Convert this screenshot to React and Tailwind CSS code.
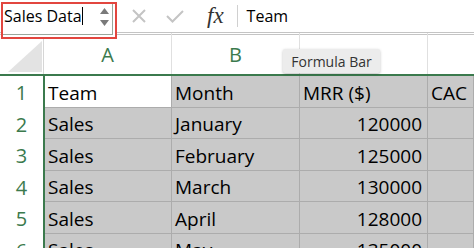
import React from 'react';

const rows = [
  ['Team', 'Month', 'MRR ($)', 'CAC'],
  ['Sales', 'January', '120000', ''],
  ['Sales', 'February', '125000', ''],
  ['Sales', 'March', '130000', ''],
  ['Sales', 'April', '128000', ''],
  ['Sales', 'May', '135000', ''],
];

const font = { fontFamily: '"Open Sans", "Noto Sans", sans-serif' };

export default function App() {
  return (
    <div className="w-[474px] h-[248px] overflow-hidden bg-white relative" style={font}>
      {/* Formula bar */}
      <div className="h-[35px] flex items-start border-b-[3px] border-double border-[#c4c4c4]">
        <div className="relative w-[116px] h-[37px] mt-[2px] ml-[1px] border-2 border-[#e2463f] shrink-0 z-10 bg-white">
          <div className="h-[31px] w-[110px] border-r border-b border-[#9aa79c] flex items-center">
            <span className="text-[16px] text-black leading-none -mt-[7px] ml-[1px]">Sales Data</span>
            <span className="w-px h-[18px] bg-black -mt-[7px]" />
            <div className="ml-auto mr-[3px] flex flex-col gap-[6px] -mt-[4px]">
              <svg width="9" height="6" viewBox="0 0 9 6"><path d="M4.5 0L9 6H0z" fill="#7a7a7a" /></svg>
              <svg width="9" height="6" viewBox="0 0 9 6"><path d="M0 0h9L4.5 6z" fill="#7a7a7a" /></svg>
            </div>
          </div>
        </div>
        <div className="flex items-center h-[32px] ml-[14px]">
          <svg width="16" height="16" viewBox="0 0 16 16">
            <path d="M2 2L14 14M14 2L2 14" stroke="#c4c4c4" strokeWidth="2" />
          </svg>
          <svg width="20" height="16" viewBox="0 0 20 16" className="ml-[18px]">
            <path d="M2 8L7.5 13.5L18 3" stroke="#c4c4c4" strokeWidth="2" fill="none" />
          </svg>
          <span className="ml-[22px] text-[23px] italic text-[#333]" style={{ fontFamily: '"Liberation Serif", serif' }}>fx</span>
          <span className="ml-[13px] w-px h-[22px] bg-[#d0d0d0]" />
          <span className="ml-[9px] text-[16px] text-black">Team</span>
        </div>
      </div>

      {/* Column headers */}
      <div className="flex h-[43px] border-b-2 border-[#3b7a4d] -mt-[2px]">
        <div className="w-[44px] shrink-0 border-r border-[#d6d6d6] flex items-end justify-end pr-[1px] pb-[2px]">
          <svg width="34" height="31" viewBox="0 0 34 31"><path d="M34 0V31H0z" fill="#e3e3e3" /></svg>
        </div>
        {['A', 'B', '', ''].map((c, i) => (
          <div
            key={i}
            className={`${i === 3 ? 'flex-1' : 'w-[128px] border-r border-[#e0e0e0]'} flex items-center justify-center text-[20px] text-[#3b7a4d] pt-[2px]`}
          >
            {c}
          </div>
        ))}
      </div>

      {/* Grid */}
      {rows.map((r, ri) => (
        <div key={ri} className="flex h-[31.5px]">
          <div className="w-[43px] shrink-0 flex items-center justify-center text-[20px] text-[#3b7a4d] pt-[3px]">
            {ri + 1}
          </div>
          <div className="w-[2px] bg-[#3b7a4d]" />
          {r.map((v, ci) => (
            <div
              key={ci}
              className={`${ci === 0 ? 'w-[127px]' : ci === 3 ? 'flex-1' : 'w-[128px]'} ${
                ri === 0 && ci === 0 ? 'bg-white' : 'bg-[#c9c9c9]'
              } border-r border-b border-[#acacac] flex items-center text-[19px] text-black pt-[3px] ${
                ri > 0 && ci === 2 ? 'justify-end pr-[5px]' : 'pl-[3px]'
              }`}
            >
              {v}
            </div>
          ))}
        </div>
      ))}

      {/* Tooltip */}
      <div className="absolute left-[283px] top-[49px] w-[97px] h-[24px] bg-[#ececec] rounded-[2px] shadow-[0_1px_3px_rgba(0,0,0,0.25)] flex items-center justify-center text-[14px] text-[#333]">
        Formula Bar
      </div>
    </div>
  );
}
